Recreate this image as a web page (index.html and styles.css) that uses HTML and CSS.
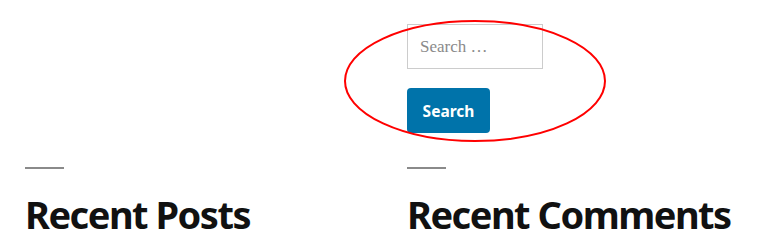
FILE: index.html
```html
<!DOCTYPE html>
<html lang="en">
<head>
<meta charset="utf-8">
<title>Widgets</title>
<link rel="stylesheet" href="styles.css">
</head>
<body>
<div class="page">
  <div class="col"></div>
  <div class="col">
    <form class="search-form">
      <input class="search-field" type="search" placeholder="Search …">
      <button class="search-submit" type="button">Search</button>
    </form>
  </div>
  <section class="widget">
    <div class="rule"></div>
    <h2 class="widget-title">Recent Posts</h2>
  </section>
  <section class="widget">
    <div class="rule"></div>
    <h2 class="widget-title">Recent Comments</h2>
  </section>
  <svg class="annotation" width="266" height="126" viewBox="0 0 266 126">
    <ellipse cx="133" cy="62" rx="130" ry="60" fill="none" stroke="#ff0000" stroke-width="2"/>
  </svg>
</div>
</body>
</html>
```
FILE: styles.css
```css
html, body {
  margin: 0;
  padding: 0;
  background: #ffffff;
}
.page {
  position: relative;
  display: grid;
  grid-template-columns: 357px 357px;
  column-gap: 25px;
  align-content: start;
  padding: 0 25px;
  height: 247px;
  overflow: hidden;
}
.search-form {
  display: flex;
  flex-direction: column;
  align-items: flex-start;
  padding-top: 24px;
  margin: 0;
}
.search-field {
  box-sizing: border-box;
  width: 136px;
  height: 45px;
  border: 1px solid #cccccc;
  padding: 0 12px;
  font-family: "Liberation Serif", "DejaVu Serif", serif;
  font-size: 17px;
  color: #111;
  outline: none;
  -webkit-appearance: none;
  appearance: none;
  margin: 0;
}
.search-field::placeholder {
  color: #8a8a8a;
}
.search-submit {
  box-sizing: border-box;
  margin-top: 19px;
  width: 83px;
  height: 45px;
  border: 0;
  border-radius: 4px;
  background: #0073aa;
  color: #ffffff;
  font-family: "Noto Sans", "Open Sans", sans-serif;
  font-weight: 700;
  font-size: 15.5px;
  padding: 0;
}
.widget {
  padding-top: 34px;
}
.rule {
  width: 39px;
  height: 2px;
  background: #8a8a8a;
}
.widget-title {
  margin: 0;
  padding-top: 20px;
  font-family: "Noto Sans", "Open Sans", sans-serif;
  font-weight: 700;
  font-size: 38px;
  line-height: 50px;
  letter-spacing: -1.5px;
  color: #111111;
  white-space: nowrap;
}
.annotation {
  position: absolute;
  left: 342px;
  top: 19px;
}
```
